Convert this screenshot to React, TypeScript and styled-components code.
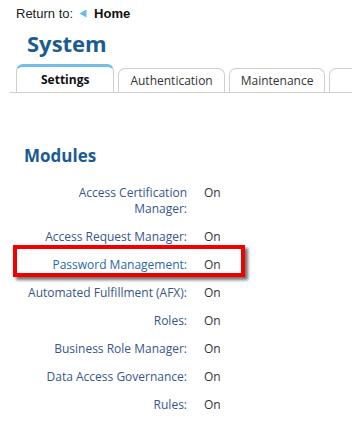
import React from 'react';
import styled, { createGlobalStyle } from 'styled-components';

const GlobalStyle = createGlobalStyle`
  body {
    margin: 0;
    background: #ffffff;
    font-family: "Open Sans", "Liberation Sans", sans-serif;
  }
`;

const Page = styled.div`
  width: 352px;
  height: 428px;
  overflow: hidden;
  background: #fff;
`;

const ReturnBar = styled.div`
  display: flex;
  align-items: center;
  gap: 6px;
  padding: 5px 16px 0;
  height: 17px;
  font-family: "Liberation Sans", Arial, sans-serif;
  font-size: 13px;
  color: #222;
`;

const HomeLink = styled.a`
  font-weight: bold;
  color: #111;
  text-decoration: none;
  margin-left: 1px;
`;

const Title = styled.h1`
  margin: 6px 0 0 27px;
  font-size: 22px;
  line-height: 30px;
  font-weight: 700;
  color: #1b5b94;
`;

const TabBar = styled.div`
  display: flex;
  align-items: flex-end;
  gap: 4px;
  margin: 5px 0 0 10px;
  padding-left: 6px;
  height: 29px;
  border-bottom: 1px solid #cfcfcf;
  overflow: hidden;
`;

const Tab = styled.div<{ $active?: boolean }>`
  flex-shrink: 0;
  box-sizing: border-box;
  display: flex;
  align-items: center;
  justify-content: center;
  height: ${(p) => (p.$active ? '29px' : '24px')};
  padding: ${(p) => (p.$active ? '0 24px 2px' : '0 11px 0 11px')};
  border: 1px solid #cfcfcf;
  border-top: ${(p) => (p.$active ? '3px solid #74bde9' : '1px solid #cfcfcf')};
  border-bottom: none;
  border-radius: 7px 7px 0 0;
  background: #fff;
  margin-bottom: ${(p) => (p.$active ? '-1px' : '0')};
  font-size: 12px;
  font-weight: ${(p) => (p.$active ? 700 : 400)};
  color: ${(p) => (p.$active ? '#111' : '#333')};
  white-space: nowrap;
`;

const Section = styled.section`
  padding: 0 0 0 24px;
  margin-top: 51px;
`;

const SectionTitle = styled.h2`
  margin: 0;
  font-size: 17px;
  line-height: 24px;
  font-weight: 700;
  color: #1b5b94;
`;

const ModuleList = styled.div`
  display: flex;
  flex-direction: column;
  gap: 12px;
  margin-top: 17px;
`;

const Row = styled.div<{ $highlight?: boolean }>`
  position: relative;
  display: grid;
  grid-template-columns: 163px auto;
  column-gap: 17px;
  font-size: 12px;
  line-height: 16px;

  ${(p) =>
    p.$highlight &&
    `
    &::after {
      content: '';
      position: absolute;
      left: -11px;
      top: -12px;
      width: 224px;
      height: 24px;
      border: 4px solid #f20000;
      box-shadow: 3px 3px 3px rgba(0, 0, 0, 0.55);
      pointer-events: none;
    }
  `}
`;

const Label = styled.div<{ $highlight?: boolean }>`
  text-align: right;
  color: ${(p) => (p.$highlight ? '#2a68a0' : '#37568a')};
`;

const Value = styled.div`
  color: #333;
`;

const modules = [
  'Access Certification Manager:',
  'Access Request Manager:',
  'Password Management:',
  'Automated Fulfillment (AFX):',
  'Roles:',
  'Business Role Manager:',
  'Data Access Governance:',
  'Rules:',
];

export default function App() {
  return (
    <Page>
      <GlobalStyle />
      <ReturnBar>
        <span>Return to:</span>
        <svg width="8" height="9" viewBox="0 0 8 9">
          <path d="M7.5 0.5 L7.5 8.5 L0.5 4.5 Z" fill="#6cbbe8" />
        </svg>
        <HomeLink href="#">Home</HomeLink>
      </ReturnBar>
      <Title>System</Title>
      <TabBar>
        <Tab $active>Settings</Tab>
        <Tab>Authentication</Tab>
        <Tab>Maintenance</Tab>
        <Tab style={{ paddingLeft: 30 }}>Logging</Tab>
      </TabBar>
      <Section>
        <SectionTitle>Modules</SectionTitle>
        <ModuleList>
          {modules.map((m) => {
            const hl = m === 'Password Management:';
            return (
              <Row key={m} $highlight={hl}>
                <Label $highlight={hl}>{m}</Label>
                <Value>On</Value>
              </Row>
            );
          })}
        </ModuleList>
      </Section>
    </Page>
  );
}
